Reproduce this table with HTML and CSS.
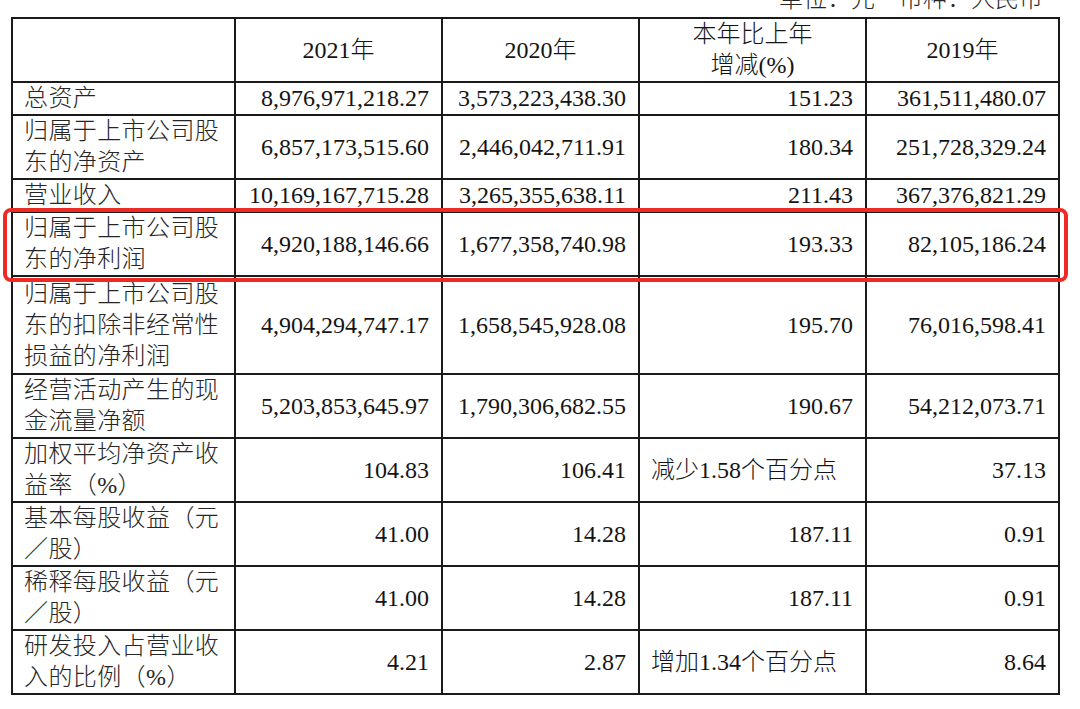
FILE: index.html
```html
<!DOCTYPE html>
<html lang="zh-CN">
<head>
<meta charset="utf-8">
<title>主要会计数据</title>
<link rel="stylesheet" href="styles.css">
</head>
<body>
<div class="page">
  <div class="unit">单位：元　币种：人民币</div>
  <div class="table-wrap">
    <table class="fin">
      <colgroup>
        <col class="w1"><col class="w2"><col class="w3"><col class="w4"><col class="w5">
      </colgroup>
      <thead>
        <tr>
          <th></th>
          <th>2021年</th>
          <th>2020年</th>
          <th>本年比上年<br>增减(%)</th>
          <th>2019年</th>
        </tr>
      </thead>
      <tbody>
        <tr>
          <td class="lbl">总资产</td>
          <td class="num">8,976,971,218.27</td>
          <td class="num">3,573,223,438.30</td>
          <td class="num">151.23</td>
          <td class="num">361,511,480.07</td>
        </tr>
        <tr>
          <td class="lbl">归属于上市公司股<br>东的净资产</td>
          <td class="num">6,857,173,515.60</td>
          <td class="num">2,446,042,711.91</td>
          <td class="num">180.34</td>
          <td class="num">251,728,329.24</td>
        </tr>
        <tr>
          <td class="lbl">营业收入</td>
          <td class="num">10,169,167,715.28</td>
          <td class="num">3,265,355,638.11</td>
          <td class="num">211.43</td>
          <td class="num">367,376,821.29</td>
        </tr>
        <tr>
          <td class="lbl">归属于上市公司股<br>东的净利润</td>
          <td class="num">4,920,188,146.66</td>
          <td class="num">1,677,358,740.98</td>
          <td class="num">193.33</td>
          <td class="num">82,105,186.24</td>
        </tr>
        <tr class="tall">
          <td class="lbl">归属于上市公司股<br>东的扣除非经常性<br>损益的净利润</td>
          <td class="num">4,904,294,747.17</td>
          <td class="num">1,658,545,928.08</td>
          <td class="num">195.70</td>
          <td class="num">76,016,598.41</td>
        </tr>
        <tr>
          <td class="lbl">经营活动产生的现<br>金流量净额</td>
          <td class="num">5,203,853,645.97</td>
          <td class="num">1,790,306,682.55</td>
          <td class="num">190.67</td>
          <td class="num">54,212,073.71</td>
        </tr>
        <tr>
          <td class="lbl">加权平均净资产收<br>益率（%）</td>
          <td class="num">104.83</td>
          <td class="num">106.41</td>
          <td class="txt">减少1.58个百分点</td>
          <td class="num">37.13</td>
        </tr>
        <tr>
          <td class="lbl">基本每股收益（元<br>／股）</td>
          <td class="num">41.00</td>
          <td class="num">14.28</td>
          <td class="num">187.11</td>
          <td class="num">0.91</td>
        </tr>
        <tr>
          <td class="lbl">稀释每股收益（元<br>／股）</td>
          <td class="num">41.00</td>
          <td class="num">14.28</td>
          <td class="num">187.11</td>
          <td class="num">0.91</td>
        </tr>
        <tr>
          <td class="lbl">研发投入占营业收<br>入的比例（%）</td>
          <td class="num">4.21</td>
          <td class="num">2.87</td>
          <td class="txt">增加1.34个百分点</td>
          <td class="num">8.64</td>
        </tr>
      </tbody>
    </table>
    <div class="highlight"></div>
  </div>
</div>
</body>
</html>
```

FILE: styles.css
```css
html, body {
  margin: 0;
  background: #ffffff;
}

body {
  font-family: "Liberation Serif", "Noto Sans CJK SC", serif;
  font-size: 24px;
  color: #141414;
}

.page {
  padding-left: 11px;
  width: 1049px;
}

.unit {
  line-height: 31px;
  margin-top: -16px;
  margin-bottom: 2px;
  text-align: right;
  padding-right: 17px;
  white-space: nowrap;
  font-weight: 300;
  color: #262626;
}

.table-wrap {
  position: relative;
}

.fin {
  border-collapse: separate;
  border-spacing: 0;
  table-layout: fixed;
  width: 1049px;
  border-left: 2px solid #1a1a1a;
  border-top: 2px solid #1a1a1a;
}

.w1 { width: 223px; }
.w2 { width: 207px; }
.w3 { width: 197px; }
.w4 { width: 227px; }
.w5 { width: 193px; }

.fin th,
.fin td {
  box-sizing: border-box;
  border-right: 2px solid #1a1a1a;
  border-bottom: 2px solid #1a1a1a;
  padding: 0;
  line-height: 31px;
  font-weight: normal;
  vertical-align: middle;
}

.fin th {
  text-align: center;
  font-weight: 300;
}

.fin .lbl {
  padding-left: 11px;
  text-align: left;
  letter-spacing: 0.4px;
  white-space: nowrap;
  font-weight: 300;
  color: #262626;
}

.fin .num {
  padding-right: 12px;
  text-align: right;
  white-space: nowrap;
}

.fin .txt {
  padding-left: 11px;
  text-align: left;
  white-space: nowrap;
  font-weight: 300;
}

.fin .tall td {
  height: 98px;
}

.highlight {
  position: absolute;
  left: -8px;
  top: 191px;
  width: 1065px;
  height: 74px;
  box-sizing: border-box;
  border: 4px solid #ee2a24;
  border-radius: 8px;
  pointer-events: none;
}
```
